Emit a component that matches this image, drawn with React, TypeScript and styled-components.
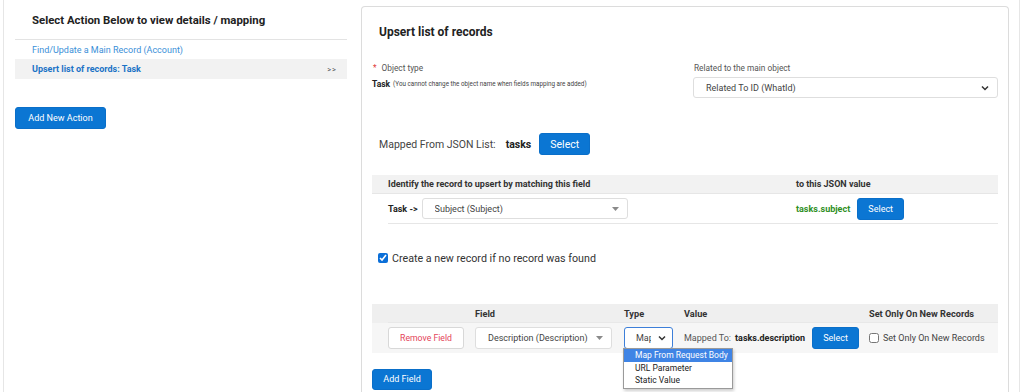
import styled, { createGlobalStyle, css } from "styled-components";

const GlobalStyle = createGlobalStyle`
  * { box-sizing: border-box; }
  body {
    margin: 0;
    background: #fff;
    font-family: Roboto, "Noto Sans", Arial, sans-serif;
    color: #222;
  }
`;

const Page = styled.div`
  display: flex;
  height: 392px;
  width: 1017px;
  margin-left: 3px;
  border-left: 1px solid #e6e6e6;
  border-right: 1px solid #e6e6e6;
  overflow: hidden;
`;

const LeftCol = styled.div`
  width: 357px;
  flex-shrink: 0;
  padding: 0 14px 0 11px;
`;

const LeftTitle = styled.div`
  height: 40px;
  display: flex;
  align-items: center;
  padding-left: 17px;
  font-size: 11.4px;
  font-weight: 700;
  color: #222;
  border-bottom: 1px solid #e3e3e3;
`;

const ActionRow = styled.div<{ $active?: boolean }>`
  height: ${(p) => (p.$active ? 20 : 19)}px;
  display: flex;
  align-items: center;
  justify-content: space-between;
  padding: 0 10px 0 17px;
  font-size: 9px;
  color: #3b8fd8;
  ${(p) =>
    p.$active &&
    css`
      background: #f2f2f2;
      font-weight: 700;
      color: #1b72c6;
    `}
`;

const Arrows = styled.span`
  font-size: 7.5px;
  font-weight: 400;
  color: #555;
  letter-spacing: 1px;
`;

const Button = styled.button<{ $w?: number; $h?: number; $fs?: number }>`
  height: ${(p) => p.$h ?? 21}px;
  width: ${(p) => (p.$w ? p.$w + "px" : "auto")};
  flex-shrink: 0;
  padding: 0;
  border: 1px solid #0a6fc9;
  border-radius: 3px;
  background: #0b76d3;
  color: #fff;
  font-family: inherit;
  font-size: ${(p) => p.$fs ?? 9}px;
  white-space: nowrap;
  display: inline-flex;
  align-items: center;
  justify-content: center;
  cursor: pointer;
`;

const AddActionWrap = styled.div`
  margin-top: 27px;
`;

const Card = styled.div`
  width: 648px;
  flex-shrink: 0;
  margin-top: 6px;
  border: 1px solid #dcdcdc;
  border-bottom: none;
  border-radius: 4px 4px 0 0;
  padding: 0 10px;
`;

const CardTitle = styled.div`
  height: 48px;
  display: flex;
  align-items: center;
  padding: 2px 0 0 7px;
  font-size: 12px;
  font-weight: 700;
  color: #222;
`;

const FormGrid = styled.div`
  display: grid;
  grid-template-columns: 321px 305px;
  margin-top: 6px;
`;

const FieldLabel = styled.div`
  height: 14px;
  display: flex;
  align-items: center;
  padding-left: 1px;
  font-size: 8.3px;
  color: #555;
`;

const Required = styled.span`
  color: #e03a3a;
  margin-right: 5px;
`;

const ObjectLine = styled.div`
  margin-top: 2px;
  height: 14px;
  display: flex;
  align-items: center;
  font-size: 8.5px;
  font-weight: 700;
  color: #222;
`;

const Note = styled.span`
  font-size: 6.3px;
  font-weight: 400;
  color: #444;
  margin-left: 3px;
`;

const SelectBox = styled.div<{ $w?: number; $h?: number; $focus?: boolean }>`
  width: ${(p) => (p.$w ? p.$w + "px" : "100%")};
  height: ${(p) => p.$h ?? 21}px;
  flex-shrink: 0;
  display: flex;
  align-items: center;
  justify-content: space-between;
  padding: 0 8px 0 12px;
  background: #fff;
  border: 1px solid #dedede;
  border-radius: 3px;
  font-size: 9px;
  color: #444;
  overflow: hidden;
  white-space: nowrap;
  ${(p) =>
    p.$focus &&
    css`
      border: 1.5px solid #3d7fd9;
      padding: 0 6px 0 11px;
    `}
`;

const RelatedSelect = styled(SelectBox)`
  margin-top: 2px;
`;

const SelectText = styled.span<{ $clip?: number }>`
  overflow: hidden;
  text-overflow: clip;
  ${(p) =>
    p.$clip &&
    css`
      width: ${p.$clip}px;
      flex-shrink: 0;
    `}
`;

const MappedRow = styled.div`
  margin-top: 35px;
  height: 22px;
  display: flex;
  align-items: center;
  padding-left: 7px;
  font-size: 10.5px;
  color: #444;
`;

const MappedValue = styled.span`
  font-weight: 700;
  color: #222;
  margin: 0 8px 0 10px;
`;

const Table1 = styled.div`
  margin-top: 20px;
  display: grid;
  grid-template-columns: 408px 202px;
  padding-left: 16px;
`;

const Table1Head = styled.div`
  grid-column: 1 / -1;
  margin-left: -16px;
  padding-left: 16px;
  height: 19px;
  display: grid;
  grid-template-columns: 408px 202px;
  background: #f2f2f2;
  border-bottom: 1px solid #e6e6e6;
  font-size: 9px;
  font-weight: 700;
  color: #333;
  align-items: center;
`;

const BodyCell = styled.div<{ $bordered?: boolean }>`
  position: relative;
  height: 30px;
  display: flex;
  align-items: center;
  gap: 4px;
  font-size: 9px;
  color: #444;
  white-space: nowrap;
  ${(p) =>
    p.$bordered &&
    css`
      border-bottom: 1px solid #e6e6e6;
    `}
`;

const TaskArrow = styled.span`
  font-weight: 700;
  color: #222;
`;

const GreenValue = styled.span`
  font-weight: 700;
  color: #2f8f1f;
  margin-right: 3px;
`;

const CheckRow = styled.label`
  margin-top: 26px;
  height: 16px;
  display: flex;
  align-items: center;
  gap: 4px;
  padding-left: 6px;
  font-size: 10.7px;
  color: #333;
`;

const Check = styled.input`
  width: 10px;
  height: 10px;
  margin: 0;
  flex-shrink: 0;
  accent-color: #0b6fd8;
`;

const RemoveButton = styled.button`
  width: 76px;
  height: 22px;
  border: 1px solid #d8d8d8;
  border-radius: 3px;
  background: #fff;
  color: #e4455a;
  font-family: inherit;
  font-size: 8.7px;
  white-space: nowrap;
  padding: 0;
`;

const Table2 = styled.div`
  margin-top: 38px;
  display: grid;
  grid-template-columns: 87px 149px 60px 185px 129px;
  padding-left: 16px;
  background: #f6f6f6;
`;

const Table2HeadBg = styled.div`
  grid-column: 1 / -1;
  margin-left: -16px;
  padding-left: 16px;
  display: grid;
  grid-template-columns: 87px 149px 60px 185px 129px;
  background: #efefef;
`;

const Table2HeadCell = styled.div`
  height: 19px;
  display: flex;
  align-items: center;
  font-size: 9.2px;
  font-weight: 700;
  color: #333;
  border-bottom: 1px solid #e8e8e8;
`;

const MappedTo = styled.span`
  color: #555;
`;

const MappedField = styled.span`
  font-weight: 700;
  color: #222;
  margin-right: 3px;
`;

const SmallCheckLabel = styled.span`
  font-size: 9px;
  color: #444;
`;

const Dropdown = styled.ul`
  position: absolute;
  left: -1px;
  top: 25px;
  width: 110px;
  margin: 0;
  padding: 0 0 1px;
  list-style: none;
  background: #fff;
  border: 1px solid #9a9a9a;
  box-shadow: 1px 2px 3px rgba(0, 0, 0, 0.2);
  z-index: 5;
`;

const Option = styled.li<{ $selected?: boolean }>`
  height: 12.5px;
  line-height: 12.5px;
  padding-left: 11px;
  font-size: 8.5px;
  color: #222;
  white-space: nowrap;
  ${(p) =>
    p.$selected &&
    css`
      background: #3f84e5;
      color: #fff;
    `}
`;

const AddFieldWrap = styled.div`
  margin-top: 14px;
`;

const Chevron = () => (
  <svg width="8" height="6" viewBox="0 0 8 6" style={{ flexShrink: 0 }}>
    <path d="M1 1.5 L4 4.5 L7 1.5" fill="none" stroke="#333" strokeWidth="1.5" />
  </svg>
);

const Caret = () => (
  <svg width="7" height="4" viewBox="0 0 7 4" style={{ flexShrink: 0 }}>
    <path d="M0 0 L7 0 L3.5 4 Z" fill="#8a8a8a" />
  </svg>
);

const App = () => {
  return (
    <>
      <GlobalStyle />
      <Page>
        <LeftCol>
          <LeftTitle>Select Action Below to view details / mapping</LeftTitle>
          <ActionRow>Find/Update a Main Record (Account)</ActionRow>
          <ActionRow $active>
            Upsert list of records: Task
            <Arrows>&gt;&gt;</Arrows>
          </ActionRow>
          <AddActionWrap>
            <Button $w={91} $h={22}>Add New Action</Button>
          </AddActionWrap>
        </LeftCol>

        <Card>
          <CardTitle>Upsert list of records</CardTitle>

          <FormGrid>
            <div>
              <FieldLabel>
                <Required>*</Required>Object type
              </FieldLabel>
              <ObjectLine>
                Task
                <Note>(You cannot change the object name when fields mapping are added)</Note>
              </ObjectLine>
            </div>
            <div>
              <FieldLabel>Related to the main object</FieldLabel>
              <RelatedSelect $h={21}>
                <SelectText>Related To ID (WhatId)</SelectText>
                <Chevron />
              </RelatedSelect>
            </div>
          </FormGrid>

          <MappedRow>
            Mapped From JSON List:
            <MappedValue>tasks</MappedValue>
            <Button $w={51} $h={22} $fs={10.5}>Select</Button>
          </MappedRow>

          <Table1>
            <Table1Head>
              <span>Identify the record to upsert by matching this field</span>
              <span>to this JSON value</span>
            </Table1Head>
            <BodyCell $bordered>
              <TaskArrow>Task -&gt;</TaskArrow>
              <SelectBox $w={206}>
                <SelectText>Subject (Subject)</SelectText>
                <Caret />
              </SelectBox>
            </BodyCell>
            <BodyCell $bordered>
              <GreenValue>tasks.subject</GreenValue>
              <Button $w={47} $h={22}>Select</Button>
            </BodyCell>
          </Table1>

          <CheckRow>
            <Check type="checkbox" defaultChecked />
            Create a new record if no record was found
          </CheckRow>

          <Table2>
            <Table2HeadBg>
              <Table2HeadCell />
              <Table2HeadCell>Field</Table2HeadCell>
              <Table2HeadCell>Type</Table2HeadCell>
              <Table2HeadCell>Value</Table2HeadCell>
              <Table2HeadCell>Set Only On New Records</Table2HeadCell>
            </Table2HeadBg>
            <BodyCell>
              <RemoveButton>Remove Field</RemoveButton>
            </BodyCell>
            <BodyCell>
              <SelectBox $w={137} $h={22}>
                <SelectText>Description (Description)</SelectText>
                <Caret />
              </SelectBox>
            </BodyCell>
            <BodyCell>
              <SelectBox $w={49} $h={22} $focus>
                <SelectText $clip={15}>Map</SelectText>
                <Chevron />
              </SelectBox>
              <Dropdown>
                <Option $selected>Map From Request Body</Option>
                <Option>URL Parameter</Option>
                <Option>Static Value</Option>
              </Dropdown>
            </BodyCell>
            <BodyCell>
              <MappedTo>Mapped To:</MappedTo>
              <MappedField>tasks.description</MappedField>
              <Button $w={47} $h={22}>Select</Button>
            </BodyCell>
            <BodyCell>
              <Check type="checkbox" />
              <SmallCheckLabel>Set Only On New Records</SmallCheckLabel>
            </BodyCell>
          </Table2>

          <AddFieldWrap>
            <Button $w={60} $h={21}>Add Field</Button>
          </AddFieldWrap>
        </Card>
      </Page>
    </>
  );
};

export default App;
